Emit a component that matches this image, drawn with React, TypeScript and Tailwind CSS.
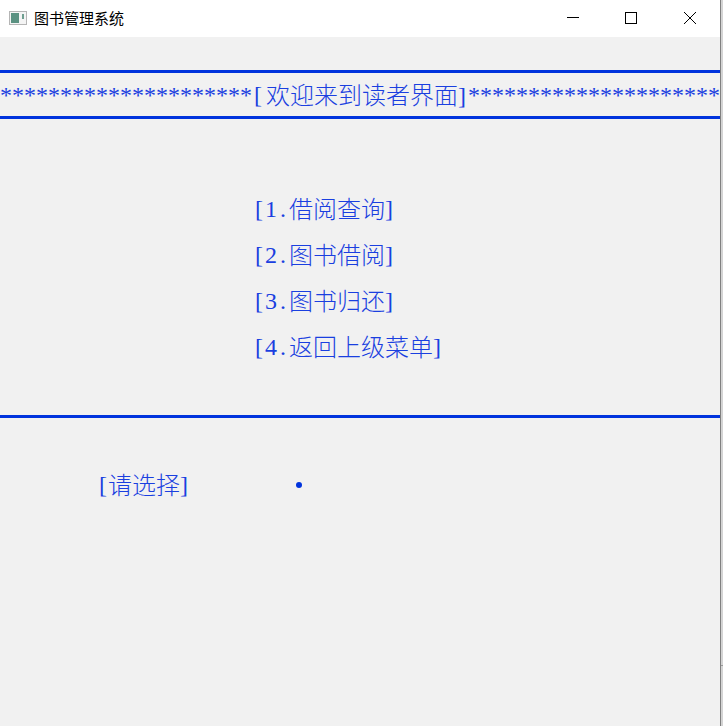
function A({ children }: { children: string }) {
  return (
    <>
      {children.split("").map((c, i) => (
        <span key={i} className="inline-block w-[12px] text-center font-['Liberation_Serif',serif] font-normal">
          {c}
        </span>
      ))}
    </>
  );
}

function Line() {
  return <div className="h-[3px] bg-[#0033dd]" />;
}

function Label({ n, text }: { n?: string; text: string }) {
  return (
    <div className="h-[46px] flex items-center whitespace-nowrap">
      <span className="-mr-[1px]"><A>{"["}</A></span>
      {n && <span className="ml-[1px]"><A>{n + "."}</A></span>}
      <span>{text}</span>
      <span className="-ml-[2px]"><A>{"]"}</A></span>
    </div>
  );
}

export default function App() {
  const stars = "*".repeat(21);
  return (
    <div className="w-[723px] h-[726px] bg-white flex font-['Noto_Sans_CJK_SC',serif] text-[24px] leading-none text-[#1a3fe0] overflow-hidden font-light">
      <div className="w-[721px] shrink-0 flex flex-col bg-[#f1f1f1] border-r border-[#808080]">
        <div className="h-[37px] shrink-0 bg-white flex items-center pb-[1px] text-black text-[15px] font-normal">
          <svg width="18" height="16" viewBox="0 0 18 16" className="ml-[9px] mr-[7px]">
            <rect x="0.5" y="1.5" width="17" height="13" fill="#f4f4f4" stroke="#b5b5b5" />
            <rect x="2" y="3" width="8" height="10" fill="#5b9282" />
            <rect x="13" y="4" width="2" height="5" fill="#6f9f90" />
          </svg>
          <span className="-mt-[1px]">图书管理系统</span>
          <div className="ml-auto flex items-center">
            <svg width="12" height="12" viewBox="0 0 12 12" className="mr-[46px]"><path d="M0 5.5H12" stroke="#000" /></svg>
            <svg width="12" height="12" viewBox="0 0 12 12" className="mr-[47px]"><rect x="0.5" y="0.5" width="11" height="11" fill="none" stroke="#000" /></svg>
            <svg width="12" height="12" viewBox="0 0 12 12" className="mr-[24px]"><path d="M0 0L12 12M12 0L0 12" stroke="#000" /></svg>
          </div>
        </div>
        <div className="mt-[33px]"><Line /></div>
        <div className="h-[43px] flex items-center whitespace-nowrap overflow-hidden">
          <A>{stars}</A>
          <A>{"["}</A>
          <span className="ml-[2px] -mt-[2px]">欢迎来到读者界面</span>
          <span className="-ml-[2px]"><A>{"]"}</A></span>
          <A>{stars}</A>
        </div>
        <Line />
        <div className="mt-[66px] ml-[253px] flex flex-col">
          <Label n="1" text="借阅查询" />
          <Label n="2" text="图书借阅" />
          <Label n="3" text="图书归还" />
          <Label n="4" text="返回上级菜单" />
        </div>
        <div className="mt-[46px]"><Line /></div>
        <div className="mt-[43px] ml-[97px] flex items-center">
          <Label text="请选择" />
          <div className="ml-[106px] mt-[1px] w-[6px] h-[6px] rounded-full bg-[#0033dd]" />
        </div>
      </div>
      <div className="relative w-[2px] shrink-0 bg-[#d4d4d4]">
        <div className="absolute left-0 top-[665px] w-[2px] h-[1px] bg-[#9a9a9a]" />
      </div>
    </div>
  );
}
